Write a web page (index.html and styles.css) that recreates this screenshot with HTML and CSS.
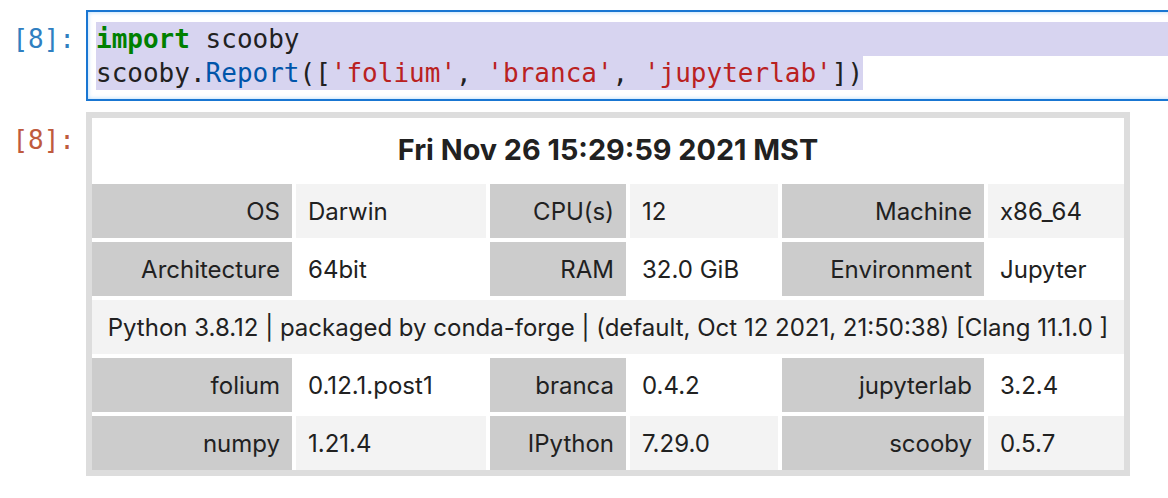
FILE: index.html
```html
<!DOCTYPE html>
<html lang="en">
<head>
<meta charset="utf-8">
<title>scooby report</title>
<link rel="stylesheet" href="styles.css">
</head>
<body>
<div class="notebook">
  <div class="cell cell-input">
    <div class="prompt prompt-in">[8]:</div>
    <div class="editor">
      <div class="line sel-full"><span class="kw">import</span> scooby</div>
      <div class="line sel-part">scooby.<span class="prop">Report</span>([<span class="str">'folium'</span>, <span class="str">'branca'</span>, <span class="str">'jupyterlab'</span>])</div>
    </div>
  </div>
  <div class="cell cell-output">
    <div class="prompt prompt-out">[8]:</div>
    <div class="report">
      <div class="c title">Fri Nov 26 15:29:59 2021 MST</div>

      <div class="c k">OS</div>
      <div class="c v shade">Darwin</div>
      <div class="c k">CPU(s)</div>
      <div class="c v shade">12</div>
      <div class="c k">Machine</div>
      <div class="c v shade">x86_64</div>

      <div class="c k">Architecture</div>
      <div class="c v">64bit</div>
      <div class="c k">RAM</div>
      <div class="c v">32.0 GiB</div>
      <div class="c k">Environment</div>
      <div class="c v">Jupyter</div>

      <div class="c wide shade">Python 3.8.12 | packaged by conda-forge | (default, Oct 12 2021, 21:50:38) [Clang 11.1.0 ]</div>

      <div class="c k">folium</div>
      <div class="c v">0.12.1.post1</div>
      <div class="c k">branca</div>
      <div class="c v">0.4.2</div>
      <div class="c k">jupyterlab</div>
      <div class="c v">3.2.4</div>

      <div class="c k">numpy</div>
      <div class="c v shade">1.21.4</div>
      <div class="c k">IPython</div>
      <div class="c v shade">7.29.0</div>
      <div class="c k">scooby</div>
      <div class="c v shade">0.5.7</div>
    </div>
  </div>
</div>
</body>
</html>
```
FILE: styles.css
```css
html, body {
  margin: 0;
  padding: 0;
  background: #ffffff;
  overflow: hidden;
}

.notebook {
  padding-top: 10px;
  display: flex;
  flex-direction: column;
  gap: 11px;
  width: 1200px;
}

.cell {
  display: flex;
  align-items: flex-start;
}

.prompt {
  flex: none;
  width: 75px;
  padding-right: 11px;
  text-align: right;
  font-family: "DejaVu Sans Mono", monospace;
  font-size: 26px;
  line-height: 34px;
}

.prompt-in {
  color: #307fc1;
  padding-top: 12px;
}

.prompt-out {
  color: #bf5b3d;
  padding-top: 11px;
}

.editor {
  flex: 1;
  border: 2px solid #1976d2;
  background: #ffffff;
  box-shadow: inset 0 0 4px rgba(100, 181, 246, 0.55);
  padding: 10px 0 9px 8px;
  font-family: "DejaVu Sans Mono", monospace;
  font-size: 26px;
  line-height: 34px;
  color: #212121;
}

.line {
  height: 34px;
  white-space: pre;
}

.sel-full {
  background: #d7d4f0;
}

.sel-part {
  background: #d7d4f0;
  width: max-content;
}

.kw {
  color: #008000;
  font-weight: bold;
}

.prop {
  color: #0055aa;
}

.str {
  color: #ba2121;
}

.report {
  display: grid;
  grid-template-columns: 200px 190px 136px 148px 202px 136px;
  grid-template-rows: 62px repeat(5, 54px);
  gap: 4px;
  border: 6px solid #dddddd;
  background: #ffffff;
  font-family: Inter, "Liberation Sans", sans-serif;
  font-size: 24px;
  color: #212121;
}

.c {
  display: flex;
  align-items: center;
  padding: 0 12px;
  white-space: nowrap;
}

.title {
  grid-column: 1 / -1;
  justify-content: center;
  font-weight: bold;
  font-size: 28.8px;
}

.k {
  background: #cccccc;
  justify-content: flex-end;
}

.v {
  justify-content: flex-start;
}

.shade {
  background: #f3f3f3;
}

.wide {
  grid-column: 1 / -1;
  justify-content: center;
}
```
